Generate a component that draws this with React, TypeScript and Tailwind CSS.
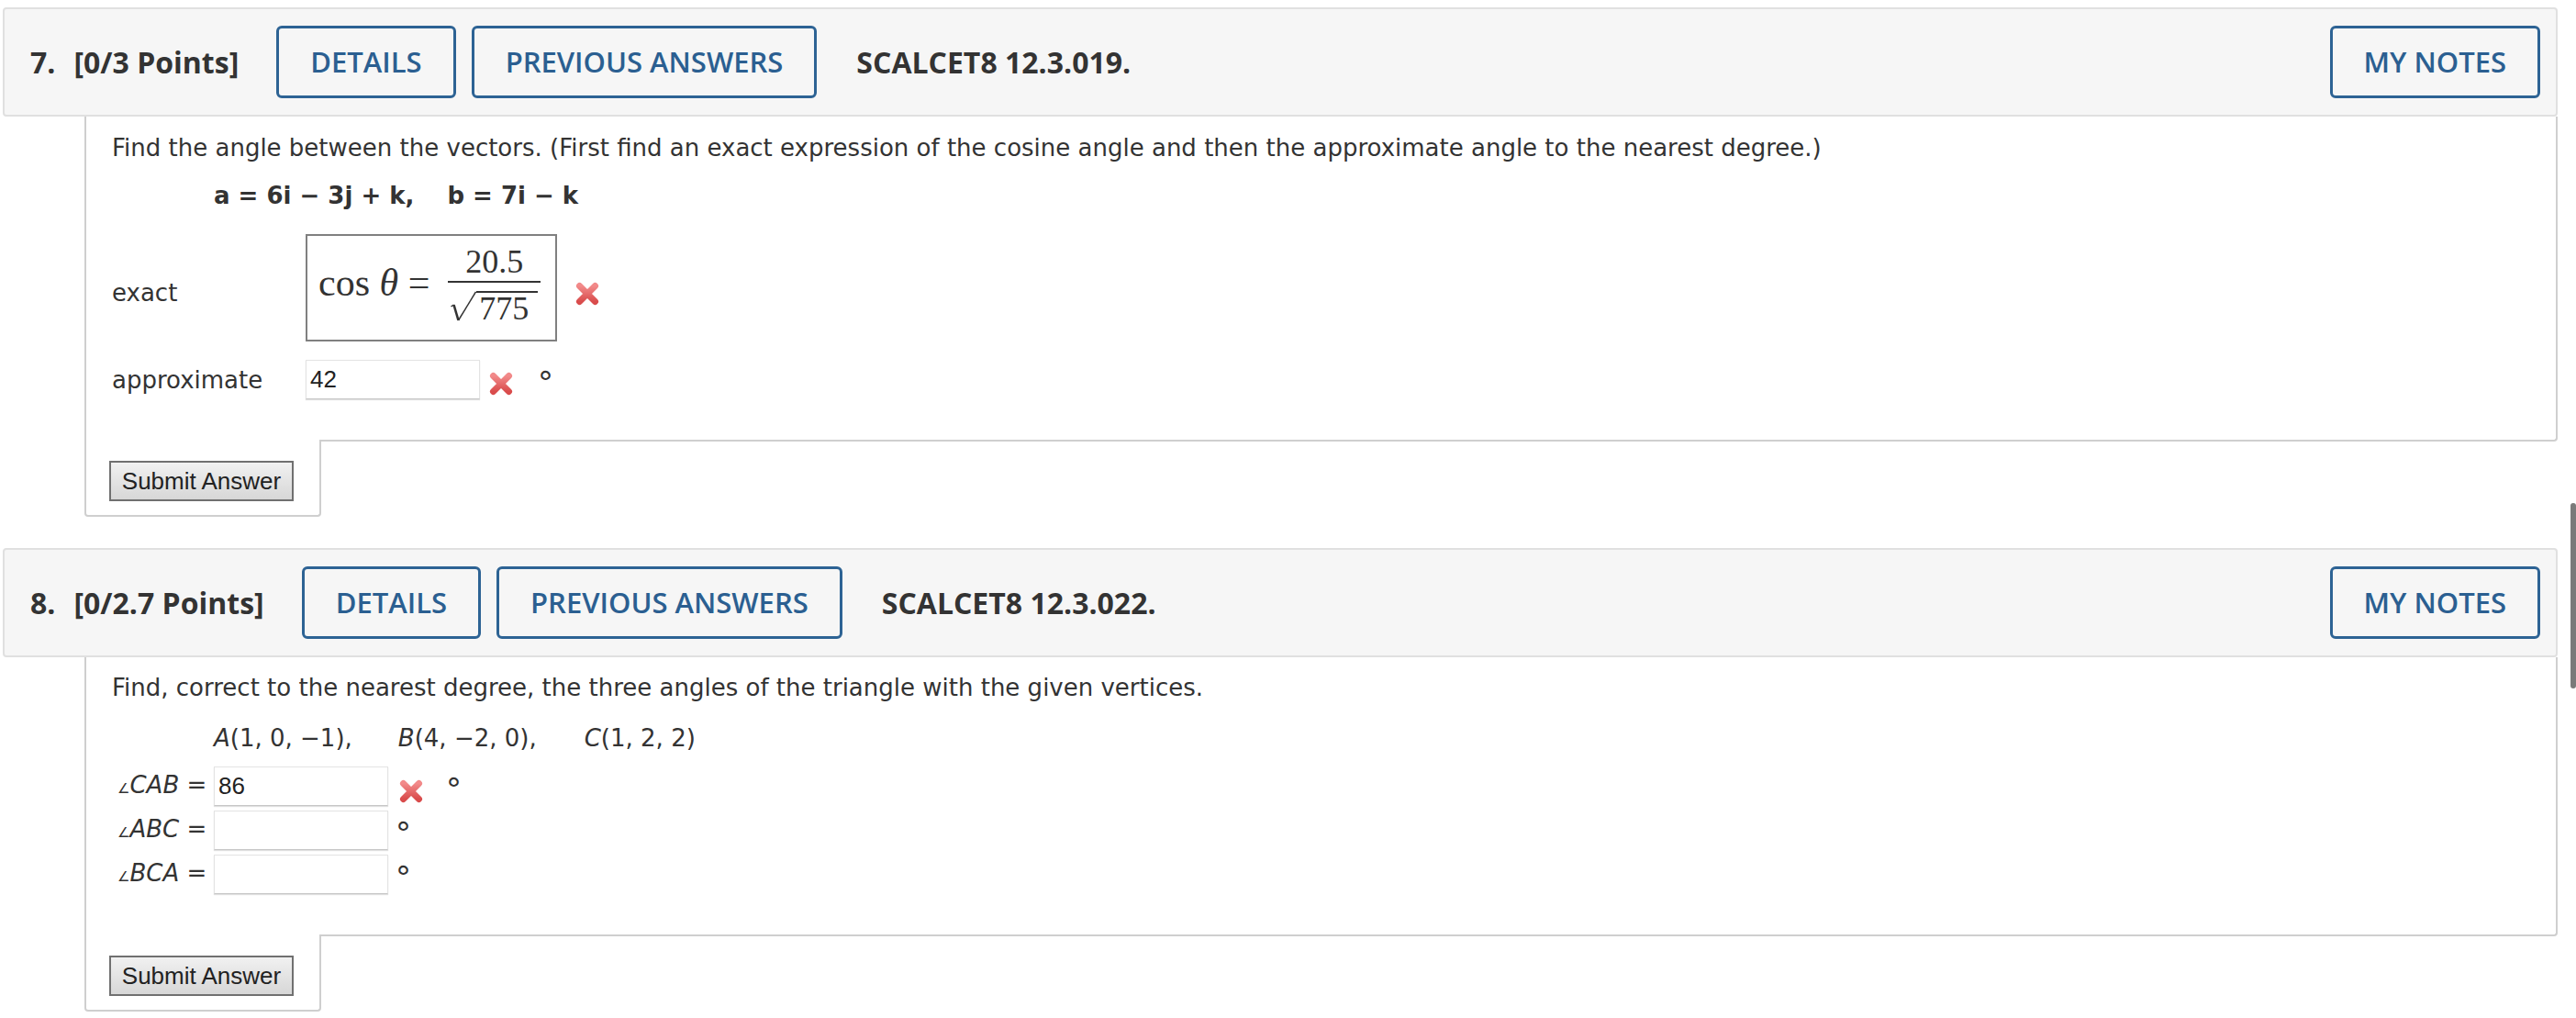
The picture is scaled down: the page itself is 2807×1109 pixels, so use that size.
import type { ReactNode } from 'react'

const bodyFont = "font-['DejaVu_Sans',Verdana,sans-serif]"

function HeaderButton({ children, className = '' }: { children: ReactNode; className?: string }) {
  return (
    <button
      type="button"
      className={`flex h-[79px] items-center rounded-[6px] border-[3px] border-[#2d6394] px-[34px] text-[31px] font-semibold text-[#2b5f91] ${className}`}
    >
      {children}
    </button>
  )
}

function QuestionHeader({ num, points, code }: { num: number; points: string; code: string }) {
  return (
    <div className="flex h-[119px] items-center rounded-[4px] border-2 border-[#e0e0e0] bg-[#f6f6f6] pl-[28px] pr-[17px] font-['Open_Sans',sans-serif] text-[32px]">
      <span className="font-bold text-[#333]">{num}.</span>
      <span className="ml-[20px] font-bold text-[#333]">[{points} Points]</span>
      <HeaderButton className="ml-[41px]">DETAILS</HeaderButton>
      <HeaderButton className="ml-[17px]">PREVIOUS ANSWERS</HeaderButton>
      <span className="ml-[43px] font-bold text-[#333]">{code}</span>
      <HeaderButton className="ml-auto">MY NOTES</HeaderButton>
    </div>
  )
}

function WrongMark({ className = '' }: { className?: string }) {
  return (
    <svg viewBox="0 0 28 28" width={28} height={28} className={`shrink-0 ${className}`}>
      <defs>
        <linearGradient id="wrong-grad" x1="0" y1="0" x2="0" y2="1">
          <stop offset="0" stopColor="#f28a8a" />
          <stop offset="1" stopColor="#d94c4c" />
        </linearGradient>
      </defs>
      <path d="M5.5 5.5 L22.5 22.5 M22.5 5.5 L5.5 22.5" stroke="url(#wrong-grad)" strokeWidth={7} strokeLinecap="round" />
    </svg>
  )
}

// degree ring sits high, like a superscript, next to the answer box
function Degree({ className = '' }: { className?: string }) {
  return <span className={`${bodyFont} mt-[6px] text-[34px] leading-[30px] text-[#333] ${className}`}>°</span>
}

function AnswerInput({ value = '', width }: { value?: string; width: string }) {
  return (
    <input
      readOnly
      value={value}
      className={`h-[43px] ${width} border border-[#e3e3e3] border-b-[#c6c6c6] bg-white pl-[4px] font-['Liberation_Sans',Arial,sans-serif] text-[26px] text-[#222] shadow-[0_1px_1px_rgba(0,0,0,0.12)] outline-none`}
    />
  )
}

function SubmitTab() {
  return (
    <div className="relative -mt-[2px] ml-[89px] w-[258px] rounded-b-[4px] border-2 border-t-0 border-[#cfcfcf] bg-white pb-[15px] pl-[25px] pt-[23px]">
      <button
        type="button"
        className="flex h-[44px] w-[201px] items-center justify-center border-2 border-[#707070] bg-gradient-to-b from-[#f1f1f1] to-[#d7d7d7] font-['Liberation_Sans',Arial,sans-serif] text-[26px] text-[#222]"
      >
        Submit Answer
      </button>
    </div>
  )
}

function CosineBox() {
  return (
    <div className="flex h-[117px] w-[274px] items-start border-2 border-[#808080] pl-[12px] font-['Liberation_Serif','Times_New_Roman',serif] text-[#333]">
      <span className="mt-[31px] whitespace-nowrap text-[42px] leading-[40px]">
        cos <i>θ</i> =
      </span>
      <div className="ml-[20px] mt-[11px] flex flex-col items-center">
        <span className="text-[36px] leading-[35px]">20.5</span>
        <div className="mt-[3px] h-[2px] w-[101px] bg-[#333]" />
        <div className="mt-[9px] flex items-start">
          <svg viewBox="0 0 28 34" width={28} height={34} className="shrink-0">
            <path d="M0.5 17 L3.5 15" stroke="#333" strokeWidth={1.5} fill="none" />
            <path d="M3.5 15 L8.5 32" stroke="#333" strokeWidth={2.6} fill="none" />
            <path d="M8.5 32 L27.5 1" stroke="#333" strokeWidth={1.5} fill="none" />
          </svg>
          <span className="border-t-2 border-[#333] pl-[3px] pr-[10px] text-[36px] leading-[35px]">775</span>
        </div>
      </div>
    </div>
  )
}

function Question7() {
  return (
    <div>
      <QuestionHeader num={7} points="0/3" code="SCALCET8 12.3.019." />
      <div className={`ml-[89px] rounded-br-[4px] border-2 border-t-0 border-[#cfcfcf] bg-white pb-[44px] pl-[28px] pt-[19px] ${bodyFont} text-[26px] leading-[30px] text-[#333]`}>
        <p className="whitespace-nowrap">
          Find the angle between the vectors. (First find an exact expression of the cosine angle and then the
          approximate angle to the nearest degree.)
        </p>
        <p className="mt-[22px] whitespace-nowrap pl-[111px] font-bold">
          <span>a = 6i − 3j + k,</span>
          <span className="ml-[36px]">b = 7i − k</span>
        </p>
        <div className="mt-[27px] flex items-center">
          <span className="w-[211px] pt-[10px]">exact</span>
          <CosineBox />
          <WrongMark className="ml-[19px] mt-[12px]" />
        </div>
        <div className="mt-[20px] flex items-center">
          <span className="w-[211px]">approximate</span>
          <AnswerInput value="42" width="w-[190px]" />
          <WrongMark className="ml-[9px] mt-[8px]" />
          <Degree className="ml-[26px]" />
        </div>
      </div>
      <SubmitTab />
    </div>
  )
}

function AngleRow({ name, value, wrong }: { name: string; value?: string; wrong?: boolean }) {
  return (
    <div className="flex items-center">
      <span className="w-[111px] whitespace-nowrap pl-[6px]">
        <span className="text-[15px]">∠</span>
        <i>{name}</i> =
      </span>
      <AnswerInput value={value} width="w-[190px]" />
      {wrong ? (
        <>
          <WrongMark className="ml-[11px] mt-[10px]" />
          <Degree className="ml-[24px]" />
        </>
      ) : (
        <Degree className="ml-[8px]" />
      )}
    </div>
  )
}

function Question8() {
  return (
    <div className="mt-[34px]">
      <QuestionHeader num={8} points="0/2.7" code="SCALCET8 12.3.022." />
      <div className={`ml-[89px] rounded-br-[4px] border-2 border-t-0 border-[#cfcfcf] bg-white pb-[44px] pl-[28px] pt-[18px] ${bodyFont} text-[26px] leading-[30px] text-[#333]`}>
        <p className="whitespace-nowrap">
          Find, correct to the nearest degree, the three angles of the triangle with the given vertices.
        </p>
        <p className="mt-[25px] whitespace-nowrap pl-[111px]">
          <span>
            <i>A</i>(1, 0, −1),
          </span>
          <span className="ml-[50px]">
            <i>B</i>(4, −2, 0),
          </span>
          <span className="ml-[52px]">
            <i>C</i>(1, 2, 2)
          </span>
        </p>
        <div className="mt-[16px] flex flex-col gap-[5px]">
          <AngleRow name="CAB" value="86" wrong />
          <AngleRow name="ABC" />
          <AngleRow name="BCA" />
        </div>
      </div>
      <SubmitTab />
    </div>
  )
}

export default function App() {
  return (
    <div className="relative min-h-[1109px] bg-white pl-[3px] pr-[20px] pt-[8px]">
      <Question7 />
      <Question8 />
      <div className="absolute right-0 top-[548px] h-[202px] w-[6px] rounded-full bg-[#7a7a7a]" />
    </div>
  )
}
